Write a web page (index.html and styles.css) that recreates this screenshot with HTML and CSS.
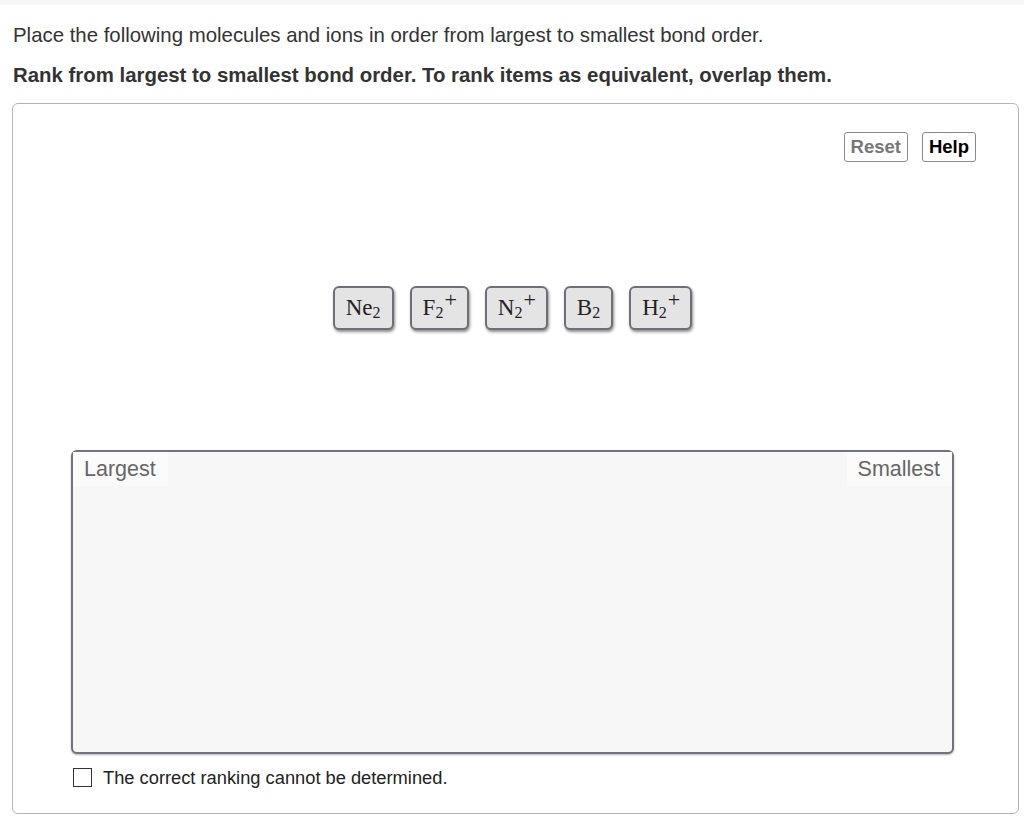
FILE: index.html
```html
<!DOCTYPE html>
<html>
<head>
<meta charset="utf-8">
<link rel="stylesheet" href="styles.css">
</head>
<body>
<div class="topstrip"></div>
<div class="page">
  <p class="intro">Place the following molecules and ions in order from largest to smallest bond order.</p>
  <p class="instr">Rank from largest to smallest bond order. To rank items as equivalent, overlap them.</p>
  <div class="panel">
    <div class="buttons">
      <button class="btn reset">Reset</button>
      <button class="btn help">Help</button>
    </div>
    <div class="tiles">
      <div class="tile"><span>Ne<sub>2</sub></span></div>
      <div class="tile ion"><span>F<sub>2</sub><sup>+</sup></span></div>
      <div class="tile ion"><span>N<sub>2</sub><sup>+</sup></span></div>
      <div class="tile"><span>B<sub>2</sub></span></div>
      <div class="tile ion"><span>H<sub>2</sub><sup>+</sup></span></div>
    </div>
    <div class="dropzone">
      <div class="labels">
        <span class="label">Largest</span>
        <span class="label">Smallest</span>
      </div>
    </div>
    <label class="check"><span class="box"></span>The correct ranking cannot be determined.</label>
  </div>
</div>
</body>
</html>
```

FILE: styles.css
```css
html, body {
  margin: 0;
  padding: 0;
  background: #fff;
}
body {
  font-family: "Liberation Sans", Arial, sans-serif;
  color: #333;
}
.topstrip {
  height: 5px;
  background: #f6f6f6;
}
.page {
  padding: 0 5px 0 12px;
}
.intro {
  margin: 18px 0 0 1px;
  font-size: 20.4px;
  line-height: 24px;
}
.instr {
  margin: 16px 0 0 1px;
  font-size: 20.4px;
  line-height: 24px;
  font-weight: bold;
}
.panel {
  margin-top: 16px;
  border: 1px solid #b4b4b4;
  border-radius: 6px;
  box-sizing: border-box;
  height: 711px;
  display: flex;
  flex-direction: column;
}
.buttons {
  display: flex;
  justify-content: flex-end;
  gap: 14px;
  margin: 28px 42px 0 0;
}
.btn {
  font-family: "Liberation Sans", Arial, sans-serif;
  font-weight: bold;
  font-size: 18.5px;
  height: 30px;
  padding: 0 6px;
  background: #fff;
  border: 1px solid #8a8a8a;
  border-radius: 3px;
}
.reset { color: #777; }
.help { color: #000; }
.tiles {
  display: flex;
  justify-content: center;
  gap: 16px;
  margin-top: 124px;
  padding-right: 6px;
}
.tile {
  font-family: "Liberation Serif", "DejaVu Serif", serif;
  font-size: 23px;
  color: #222;
  background: #e4e4e4;
  border: 2px solid #6f6f7c;
  border-radius: 6px;
  height: 44px;
  box-sizing: border-box;
  padding: 0 11px;
  display: flex;
  align-items: center;
  justify-content: center;
  box-shadow: 1px 2px 3px rgba(0,0,0,0.45);
}
.tile.ion {
  padding: 0 10px 0 11px;
}
.tile span {
  line-height: 24px;
}
.tile sub {
  font-size: 16px;
  line-height: 0;
  vertical-align: -3px;
}
.tile sup {
  font-size: 22px;
  line-height: 0;
  vertical-align: 8px;
  margin-left: 1px;
}
.dropzone {
  margin: 120px 64px 0 58px;
  height: 304px;
  box-sizing: border-box;
  background: #f7f7f7;
  border: 2px solid #727283;
  border-radius: 6px;
  box-shadow: 0 1px 2px rgba(0,0,0,0.3);
}
.labels {
  display: flex;
  justify-content: space-between;
}
.label {
  font-size: 21.5px;
  color: #666;
  background: #fbfbfb;
  padding: 5px 12px 5px 11px;
  line-height: 24px;
}
.check {
  display: flex;
  align-items: center;
  margin: 13px 0 0 60px;
  font-size: 18.3px;
  line-height: 21px;
  color: #222;
}
.box {
  width: 17px;
  height: 17px;
  border: 1px solid #333;
  margin-right: 11px;
  background: #fff;
}
```
